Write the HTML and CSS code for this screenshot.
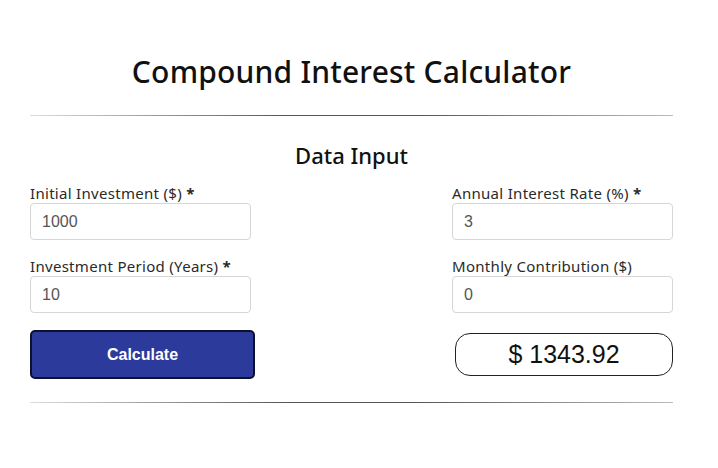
FILE: index.html
```html
<!DOCTYPE html>
<html lang="en">
<head>
  <meta charset="UTF-8" />
  <meta name="viewport" content="width=device-width, initial-scale=1" />
  <title>Compound Interest Calculator</title>
  <link rel="stylesheet" href="styles.css">
</head>
<body>
  <div class="calc">
    <h1>Compound Interest Calculator</h1>
    <hr class="line">

    <h2>Data Input</h2>

    <div class="row">
      <div class="field">
        <label>Initial Investment ($) <span class="req">*</span></label>
        <input type="text" value="1000">
      </div>
      <div class="field">
        <label>Annual Interest Rate (%) <span class="req">*</span></label>
        <input type="text" value="3">
      </div>
    </div>

    <div class="row">
      <div class="field">
        <label>Investment Period (Years) <span class="req">*</span></label>
        <input type="text" value="10">
      </div>
      <div class="field">
        <label>Monthly Contribution ($)</label>
        <input type="text" value="0">
      </div>
    </div>

    <div class="row actions">
      <button class="btn-calc">Calculate</button>
      <div class="result">$ 1343.92</div>
    </div>

    <hr class="line bottom">
  </div>
</body>
</html>
```

FILE: styles.css
```css
* { box-sizing: border-box; margin: 0; padding: 0; }

body {
  font-family: 'Noto Sans', sans-serif;
  background: #fff;
  color: #111;
}

.calc {
  width: 643px;
  margin: 0 0 0 30px;
  padding-top: 52px;
}

h1 {
  font-size: 30px; font-weight: 500;
  text-align: center;
  line-height: 40px;
  letter-spacing: 0.2px;
}

.line {
  border: none;
  height: 1px;
  background: linear-gradient(to right, #ddd, #555 40%, #555 60%, #bbb);
  margin-top: 23px;
}
.line.bottom { margin-top: 23px; }

h2 {
  font-size: 22px; font-weight: 500;
  text-align: center;
  line-height: 28px;
  margin-top: 25px;
  margin-bottom: 14px;
}

.row {
  display: flex;
  justify-content: space-between;
  margin-bottom: 16px;
}

.field { width: 221px; }

.field label {
  display: block;
  font-size: 15px;
  letter-spacing: 0.3px;
  color: #2a2a2a;
  line-height: 20px;
  white-space: nowrap;
}
.req { font-weight: 700; }

.field input {
  width: 100%; height: 37px;
  border: 1px solid #d6d6d6;
  border-radius: 4px;
  padding: 0 11px;
  font-family: 'Liberation Sans', Arial, sans-serif;
  font-size: 16px;
  color: #555;
  background: #fff;
}

.actions { align-items: center; margin-top: 17px; margin-bottom: 0; }

.btn-calc {
  width: 225px; height: 49px;
  background: #2b3a9b;
  color: #fff;
  border: 2px solid #0e1030;
  border-radius: 5px;
  font-family: 'Liberation Sans', Arial, sans-serif;
  font-size: 16px; font-weight: 700;
  cursor: pointer;
}

.result {
  width: 218px; height: 43px;
  border: 1px solid #222;
  border-radius: 15px;
  display: flex;
  align-items: center;
  justify-content: center;
  font-family: 'Liberation Sans', Arial, sans-serif;
  font-size: 25px;
  color: #111;
}
```
